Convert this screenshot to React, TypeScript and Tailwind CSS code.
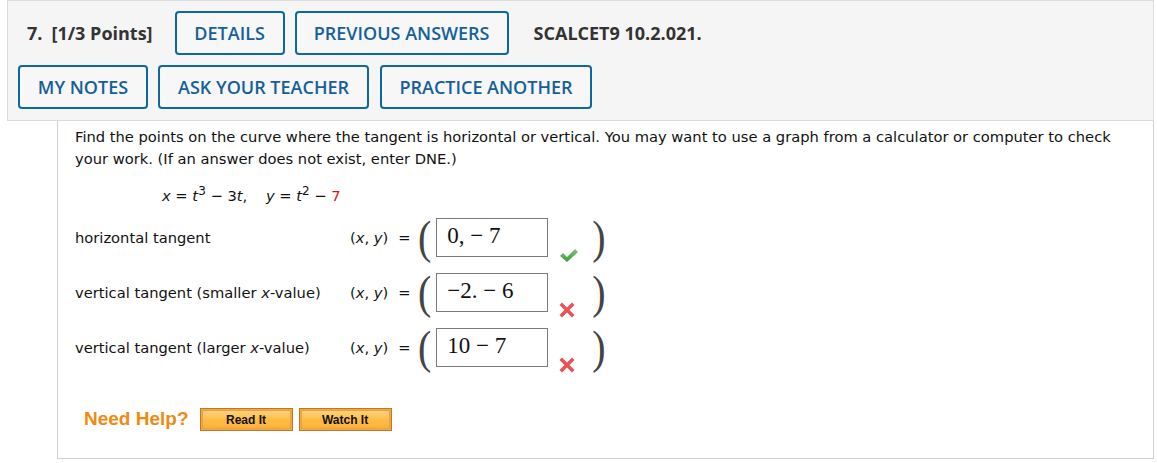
import React from "react";

const hdrBtn =
  "h-[44px] flex items-center justify-center border-2 border-[#0f67a0] rounded-[4px] bg-[#f7f7f7] text-[#15609a] text-[18px] font-semibold";

function Check() {
  return (
    <svg width="20" height="15" viewBox="0 0 20 15">
      <defs>
        <linearGradient id="gc" x1="0" y1="0" x2="0" y2="1">
          <stop offset="0" stopColor="#7cc576" />
          <stop offset="1" stopColor="#3f9a3c" />
        </linearGradient>
      </defs>
      <path d="M1 8 L4 5 L8 9 L16 1 L19 4 L8 14 Z" fill="url(#gc)" />
    </svg>
  );
}

function Cross() {
  return (
    <svg width="16" height="16" viewBox="0 0 16 16">
      <path
        d="M3 0.5 L8 5.5 L13 0.5 L15.5 3 L10.5 8 L15.5 13 L13 15.5 L8 10.5 L3 15.5 L0.5 13 L5.5 8 L0.5 3 Z"
        fill="#ec5156"
      />
    </svg>
  );
}

function Row({
  label,
  value,
  ok,
}: {
  label: React.ReactNode;
  value: string;
  ok: boolean;
}) {
  return (
    <div className="flex items-center h-[55px]">
      <div className="w-[275px] whitespace-nowrap">{label}</div>
      <div className="w-[63px] flex whitespace-nowrap">
        <span>
          (<i>x</i>, <i>y</i>)
        </span>
        <span className="ml-[10px]">=</span>
      </div>
      <div className="flex items-center h-[55px]">
        <span
          className="text-[40px] leading-none text-[#444] scale-y-[1.15] ml-[5px] mr-[5px]"
          style={{ fontFamily: '"Liberation Serif", serif' }}
        >
          (
        </span>
        <div
          className="w-[112px] h-[39px] border border-[#7a7a7a] bg-white pl-[10px] pt-[2px] text-[23px] text-[#111] leading-[30px] whitespace-pre"
          style={{ fontFamily: '"Liberation Serif", serif' }}
        >
          {value}
        </div>
        <div className="w-[44px] h-[55px] flex items-end pl-[11px] pb-[2px]">
          {ok ? <Check /> : <Cross />}
        </div>
        <span
          className="text-[40px] leading-none text-[#444] scale-y-[1.15]"
          style={{ fontFamily: '"Liberation Serif", serif' }}
        >
          )
        </span>
      </div>
    </div>
  );
}

function HelpBtn({ children, w }: { children: React.ReactNode; w: string }) {
  return (
    <div
      className={`${w} h-[23px] border border-[#b9772c] bg-[#f8a93a] p-[1px]`}
    >
      <div className="h-full border border-[#e8a048] bg-gradient-to-b from-[#ffd27a] via-[#ffbd44] to-[#fcb23c] flex items-center justify-center text-[12px] font-bold text-[#111]">
        {children}
      </div>
    </div>
  );
}

export default function App() {
  return (
    <div className="w-[1157px] h-[463px] bg-white overflow-hidden">
      <div
        className="ml-[7px] w-[1147px] h-[121px] border border-[#dcdcdc] bg-[#f5f5f5] pt-[10px] pl-[10px]"
        style={{ fontFamily: '"Open Sans", sans-serif' }}
      >
        <div className="flex items-center h-[44px]">
          <span className="ml-[9px] text-[18px] font-bold text-[#333]">7.</span>
          <span className="ml-[9px] text-[18px] font-bold text-[#333]">
            [1/3 Points]
          </span>
          <div className={`${hdrBtn} w-[110px] ml-[22px]`}>DETAILS</div>
          <div className={`${hdrBtn} w-[214px] ml-[10px]`}>PREVIOUS ANSWERS</div>
          <span className="ml-[25px] text-[18px] font-bold text-[#333]">
            SCALCET9 10.2.021.
          </span>
        </div>
        <div className="flex items-center h-[44px] mt-[10px]">
          <div className={`${hdrBtn} w-[130px]`}>MY NOTES</div>
          <div className={`${hdrBtn} w-[211px] ml-[10px]`}>ASK YOUR TEACHER</div>
          <div className={`${hdrBtn} w-[212px] ml-[11px]`}>PRACTICE ANOTHER</div>
        </div>
      </div>
      <div
        className="ml-[57px] w-[1097px] h-[338px] border-l border-r border-b border-[#cfcfcf] pl-[17px] pt-[5px] text-[14.7px] leading-[22px] text-[#111]"
        style={{ fontFamily: '"DejaVu Sans", Verdana, sans-serif' }}
      >
        <p className="pr-[20px]">
          Find the points on the curve where the tangent is horizontal or vertical. You
          may want to use a graph from a calculator or computer to check your work. (If
          an answer does not exist, enter DNE.)
        </p>
        <div className="mt-[15px] ml-[87px] h-[22px]">
          <i>x</i> = <i>t</i>
          <sup className="text-[12px]">3</sup> − 3<i>t</i>,&nbsp;&nbsp;&nbsp; <i>y</i> ={" "}
          <i>t</i>
          <sup className="text-[12px]">2</sup> − <span className="text-[#e01010]">7</span>
        </div>
        <div className="mt-[3px]">
          <Row label="horizontal tangent" value="0, − 7" ok />
          <Row
            label={
              <>
                vertical tangent (smaller <i>x</i>-value)
              </>
            }
            value="−2. − 6"
            ok={false}
          />
          <Row
            label={
              <>
                vertical tangent (larger <i>x</i>-value)
              </>
            }
            value="10 − 7"
            ok={false}
          />
        </div>
        <div
          className="flex items-center mt-[31px] ml-[9px]"
          style={{ fontFamily: '"Liberation Sans", Arial, sans-serif' }}
        >
          <span className="text-[19px] font-bold text-[#f08a10] leading-none">
            Need Help?
          </span>
          <div className="ml-[11px] mt-[2px]">
            <HelpBtn w="w-[93px]">Read It</HelpBtn>
          </div>
          <div className="ml-[6px] mt-[2px]">
            <HelpBtn w="w-[93px]">Watch It</HelpBtn>
          </div>
        </div>
      </div>
    </div>
  );
}
